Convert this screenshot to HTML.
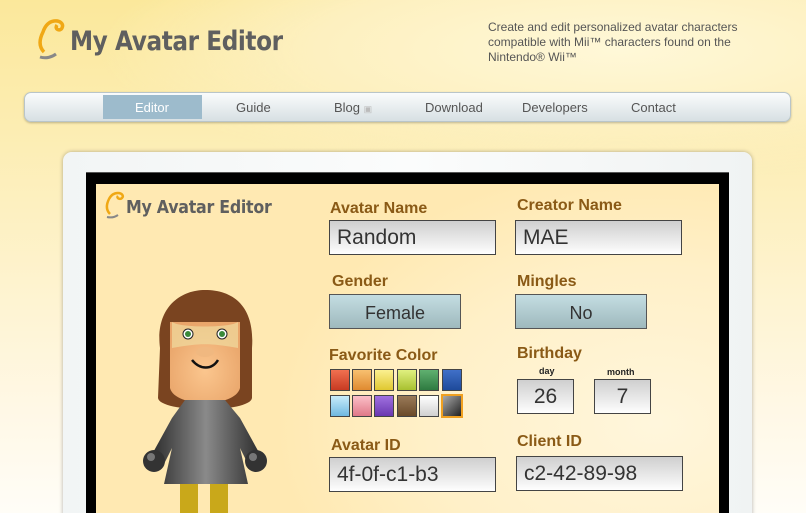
<!DOCTYPE html>
<html><head><meta charset="utf-8"><style>
*{margin:0;padding:0;box-sizing:border-box}
html{width:806px;height:513px;overflow:hidden}
body{width:806px;height:513px;overflow:hidden;position:relative;font-family:"Liberation Sans",sans-serif;background:radial-gradient(ellipse 520px 130px at 620px 50px,#fff8d8 0%,#fdf0bf 60%,rgba(253,236,170,0) 100%),linear-gradient(#fbe89b 0%,#fdf0c0 40%,#fff8e6 80%,#fffdf7 100%)}
.abs{position:absolute}
.logo{left:70px;top:26px;font-size:27px;color:#5f5f5f;font-family:"DejaVu Sans",sans-serif;transform:scaleX(0.86);transform-origin:left;font-weight:bold;letter-spacing:-0.5px}
.tag{left:488px;top:20px;font-size:12px;color:#555;line-height:15px;width:300px}
.nav{left:24px;top:92px;width:767px;height:30px;border-radius:7px;background:linear-gradient(#fafcfc,#d7e0e3);border:1px solid #b9c5c9;box-shadow:0 1px 2px rgba(0,0,0,.25)}
.nav span{position:absolute;top:7px;font-size:13px;color:#555}
.tab{left:78px;top:2px;width:99px;height:24px;background:#9dbbcc;}
.panel{left:63px;top:152px;width:689px;height:380px;border-radius:9px;background:linear-gradient(90deg,#f2f5f5,#fbfcfc 50%,#f0f3f3);box-shadow:0 0 4px rgba(0,0,0,.3)}
.frame{left:86px;top:172px;width:643px;height:360px;background:#000;border-top:1px solid #555}
.inner{left:96px;top:184px;width:623px;height:340px;background:radial-gradient(ellipse 380px 260px at 560px 240px,#fff6dc 0%,#fff0c8 60%,#ffe9b2 100%)}
.lbl{position:absolute;font-size:16px;font-weight:bold;color:#8a5a16}
.inp{position:absolute;height:35px;border:1px solid #444;background:linear-gradient(#cfcfcf,#f4f4f4 80%,#fff);font-size:21px;color:#333;padding:5px 0 0 7px}
.btn{position:absolute;height:35px;border:1px solid #555;background:linear-gradient(#c4dde2,#9eb9bd);font-size:18px;color:#333;text-align:center;padding-top:8px}
.sw{position:absolute;width:20px;height:22px;border:1px solid #444}
</style></head><body>
<svg class="abs" style="left:36px;top:16px" width="30" height="46" viewBox="0 0 30 46"><path d="M8 36 C2 30 4 22 7 16 C9 10 12 6 18 5 C24 4 28 8 26 12 C24 16 18 13 21 9" fill="none" stroke="#f0a815" stroke-width="3.5"/><path d="M4 41 C10 43 16 41 20 38" fill="none" stroke="#888" stroke-width="3"/></svg>
<div class="abs logo">My Avatar Editor</div>
<div class="abs tag">Create and edit personalized avatar characters compatible with Mii™ characters found on the Nintendo® Wii™</div>
<div class="abs nav"><div class="abs tab"></div>
<span style="left:110px;color:#fff">Editor</span><span style="left:211px">Guide</span><span style="left:309px">Blog <small style="font-size:9px;color:#bbb">▣</small></span><span style="left:400px">Download</span><span style="left:497px">Developers</span><span style="left:606px">Contact</span></div>
<div class="abs panel"></div>
<div class="abs frame"></div>
<div class="abs inner"></div>
<svg class="abs" style="left:104px;top:190px" width="22" height="30" viewBox="0 0 22 30"><path d="M6 24 C1 19 3 13 5 9 C7 5 10 3 14 3 C18 3 20 6 18 8 C16 10 12 8 14 6" fill="none" stroke="#f0a815" stroke-width="2.5"/><path d="M3 27 C7 28 11 27 14 25" fill="none" stroke="#888" stroke-width="2"/></svg>
<div class="abs" style="left:126px;top:197px;font-size:18px;color:#5f5f5f;font-family:'DejaVu Sans',sans-serif;font-weight:bold;transform:scaleX(0.88);transform-origin:left;letter-spacing:-0.3px">My Avatar Editor</div>
<svg class="abs" style="left:140px;top:288px" width="140" height="225" viewBox="0 0 140 225">
<defs><linearGradient id="b" x1="0" x2="1"><stop offset="0" stop-color="#2a2a2a"/><stop offset=".5" stop-color="#8a8a8a"/><stop offset="1" stop-color="#2a2a2a"/></linearGradient>
<radialGradient id="f" cx=".5" cy=".6" r=".6"><stop offset="0" stop-color="#fbc68e"/><stop offset="1" stop-color="#e9a56a"/></radialGradient></defs>
<rect x="40" y="170" width="18" height="55" fill="#c9a81a"/><rect x="70" y="170" width="18" height="55" fill="#c9a81a"/>
<path d="M20 60 C15 20 40 2 65 2 C95 2 115 20 112 60 L112 110 C110 125 20 125 18 110 Z" fill="#7a4420"/>
<path d="M30 34 L100 34 L100 100 C95 120 35 120 30 100 Z" fill="url(#f)"/>
<path d="M32 34 C40 40 90 40 98 34 L98 60 C70 55 60 55 32 60 Z" fill="#f0dba0" opacity=".7"/>
<circle cx="48" cy="46" r="5" fill="#fff" stroke="#222"/><circle cx="48" cy="46" r="3" fill="#3a8a3a"/>
<circle cx="82" cy="46" r="5" fill="#fff" stroke="#222"/><circle cx="82" cy="46" r="3" fill="#3a8a3a"/>
<ellipse cx="65" cy="64" rx="9" ry="5" fill="#f0b880"/>
<path d="M52 72 C60 82 72 82 78 72" fill="none" stroke="#111" stroke-width="2.5"/>
<path d="M45 112 L85 112 L100 130 L122 170 L108 176 L100 160 L108 196 L24 196 L32 160 L24 176 L10 170 L32 130 Z" fill="url(#b)"/>
<circle cx="14" cy="173" r="11" fill="#333"/><circle cx="116" cy="173" r="11" fill="#333"/>
<circle cx="11" cy="169" r="4" fill="#777"/><circle cx="113" cy="169" r="4" fill="#777"/>
</svg>
<div class="lbl" style="left:330px;top:200px">Avatar Name</div>
<div class="inp" style="left:329px;top:220px;width:167px">Random</div>
<div class="lbl" style="left:517px;top:197px">Creator Name</div>
<div class="inp" style="left:515px;top:220px;width:167px">MAE</div>
<div class="lbl" style="left:332px;top:273px">Gender</div>
<div class="btn" style="left:329px;top:294px;width:132px">Female</div>
<div class="lbl" style="left:517px;top:273px">Mingles</div>
<div class="btn" style="left:515px;top:294px;width:132px">No</div>
<div class="lbl" style="left:329px;top:347px">Favorite Color</div>
<div class="sw" style="left:330px;top:369px;background:linear-gradient(#f07050,#c83a22)"></div>
<div class="sw" style="left:352px;top:369px;background:linear-gradient(#f8c070,#e08a30)"></div>
<div class="sw" style="left:374px;top:369px;background:linear-gradient(#fbf090,#e0c830)"></div>
<div class="sw" style="left:397px;top:369px;background:linear-gradient(#e0f080,#a8c030)"></div>
<div class="sw" style="left:419px;top:369px;background:linear-gradient(#60b070,#2e7a40)"></div>
<div class="sw" style="left:442px;top:369px;background:linear-gradient(#4070c8,#1e4a9a)"></div>
<div class="sw" style="left:330px;top:395px;background:linear-gradient(#c8ecfa,#70b8e0)"></div>
<div class="sw" style="left:352px;top:395px;background:linear-gradient(#fbc0c8,#e07888)"></div>
<div class="sw" style="left:374px;top:395px;background:linear-gradient(#a070e0,#6a38b0)"></div>
<div class="sw" style="left:397px;top:395px;background:linear-gradient(#9a7a58,#6a4a2a)"></div>
<div class="sw" style="left:419px;top:395px;background:linear-gradient(#fff,#d0d0d0)"></div>
<div class="sw" style="left:441px;top:394px;width:22px;height:24px;border:2px solid #f0a020;background:linear-gradient(135deg,#aaa,#222)"></div>
<div class="lbl" style="left:517px;top:345px">Birthday</div>
<div class="abs" style="left:539px;top:366px;font-size:9px;font-weight:bold;color:#222">day</div>
<div class="abs" style="left:607px;top:367px;font-size:9px;font-weight:bold;color:#222">month</div>
<div class="inp" style="left:517px;top:379px;width:57px;text-align:center;padding-left:0">26</div>
<div class="inp" style="left:594px;top:379px;width:57px;text-align:center;padding-left:0">7</div>
<div class="lbl" style="left:331px;top:437px">Avatar ID</div>
<div class="inp" style="left:329px;top:457px;width:167px">4f-0f-c1-b3</div>
<div class="lbl" style="left:517px;top:433px">Client ID</div>
<div class="inp" style="left:516px;top:456px;width:167px">c2-42-89-98</div>
</body></html>
